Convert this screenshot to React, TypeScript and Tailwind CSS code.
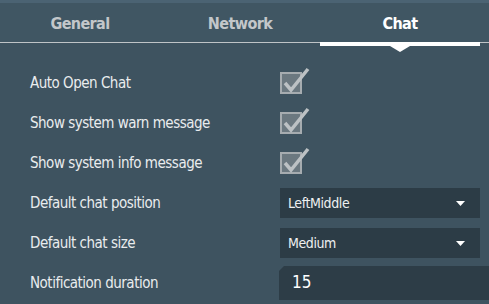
import React from 'react';

const font = { fontFamily: '"DejaVu Sans Condensed", "DejaVu Sans", sans-serif' };

function Check() {
  return (
    <div className="relative w-[22px] h-[22px] border-2 border-[#a6acb0] bg-[#6b7880]">
      <svg className="absolute -top-[8px] left-[0px]" width="28" height="28" viewBox="0 0 28 28">
        <path d="M3 17 L9 24 L26 3" fill="none" stroke="#bcc1c4" strokeWidth="3.5" strokeLinejoin="miter" />
      </svg>
    </div>
  );
}

function Select({ value }: { value: string }) {
  return (
    <div className="w-[200px] h-[30px] bg-[#2c3c46] flex items-center justify-between pl-[8px] pr-[15px] text-[14px] tracking-[-0.4px] text-[#eef0f1]">
      <span>{value}</span>
      <svg width="9" height="5" viewBox="0 0 9 5">
        <path d="M0 0 H9 L4.5 5 Z" fill="#ffffff" />
      </svg>
    </div>
  );
}

function Row({ label, children }: { label: string; children: React.ReactNode }) {
  return (
    <div className="h-[40px] flex items-center">
      <div className="w-[280px] pl-[30px] text-[15px] tracking-[-0.5px] text-[#e9ecee]">{label}</div>
      <div className="flex items-center">{children}</div>
    </div>
  );
}

export default function App() {
  const tabs = ['General', 'Network', 'Chat'];
  return (
    <div className="w-[489px] h-[304px] overflow-hidden bg-[#3e5360]" style={font}>
      <div className="h-[3px] bg-[#4b6373]" />
      <div className="bg-[#405663] h-[40px] flex relative">
        {tabs.map((t, i) => (
          <div
            key={t}
            className={`w-[160px] flex items-center justify-center text-[16px] tracking-[-0.6px] font-bold pt-[2px] ${i === 2 ? 'text-white' : 'text-[#c3c7ca]'}`}
          >
            {t}
          </div>
        ))}
        <div className="absolute left-0 bottom-0 w-[489px] h-[1px] bg-[#bfc4c7]" />
        <div className="absolute left-[320px] -bottom-[3px] w-[160px] h-[4px] bg-white" />
        <svg className="absolute left-[390px] -bottom-[9px]" width="20" height="6" viewBox="0 0 20 6">
          <path d="M0 0 H20 L10 6 Z" fill="#ffffff" />
        </svg>
      </div>
      <div className="pt-[20px]">
        <Row label="Auto Open Chat"><Check /></Row>
        <Row label="Show system warn message"><Check /></Row>
        <Row label="Show system info message"><Check /></Row>
        <Row label="Default chat position"><Select value="LeftMiddle" /></Row>
        <Row label="Default chat size"><Select value="Medium" /></Row>
        <Row label="Notification duration">
          <div
            className="w-[210px] h-[34px] bg-[#2d3d47] flex items-center pl-[13px] text-[17px] text-white"
            style={{ clipPath: 'polygon(5px 0, 100% 0, 100% 100%, 0 100%, 0 5px)' }}
          >
            15
          </div>
        </Row>
      </div>
    </div>
  );
}
